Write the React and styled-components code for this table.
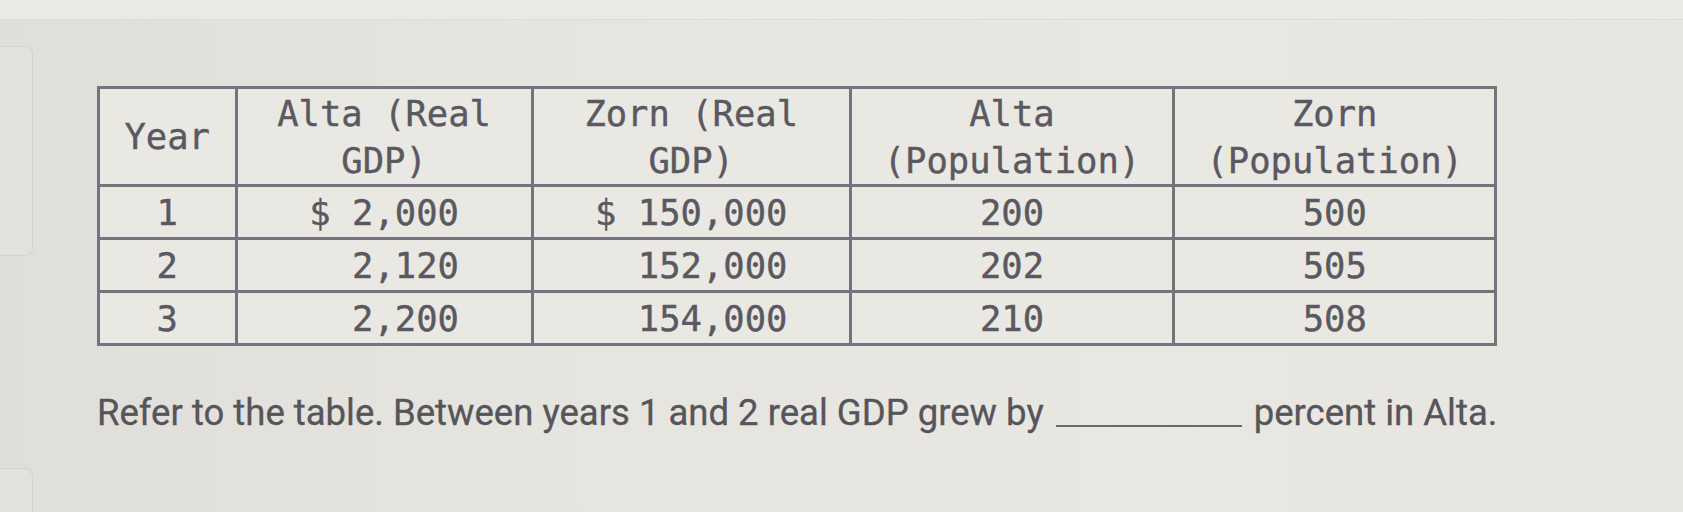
import React from "react";
import styled, { createGlobalStyle } from "styled-components";

const Global = createGlobalStyle`
  html, body { margin: 0; padding: 0; }
  body {
    width: 1683px;
    height: 512px;
    overflow: hidden;
    background: linear-gradient(90deg, #dfded9 0%, #e5e4df 30%, #e8e7e2 70%, #e6e5e0 100%);
  }
`;

const Page = styled.div`
  width: 1683px;
  height: 512px;
  display: flex;
  flex-direction: column;
`;

const TopBar = styled.div`
  height: 19px;
  flex: none;
  background: #eae9e5;
  border-bottom: 1px solid #dcdbd6;
`;

const Body = styled.div`
  flex: 1;
  display: flex;
`;

const Rail = styled.div`
  width: 33px;
  flex: none;
  display: flex;
  flex-direction: column;
  padding-top: 26px;
`;

const RailCard = styled.div`
  height: ${(p) => p.$h}px;
  margin-top: ${(p) => p.$mt || 0}px;
  border: 1px solid #d3d2cd;
  border-left: none;
  border-radius: 0 8px 8px 0;
  background: #e2e1dc;
`;

const Main = styled.div`
  margin-left: 64px;
  padding-top: 66px;
  display: flex;
  flex-direction: column;
`;

const Table = styled.table`
  border-collapse: collapse;
  font-family: "DejaVu Sans Mono", "Liberation Mono", monospace;
  font-size: 35.5px;
  color: #5a5860;
  -webkit-text-stroke: 0.4px #5a5860;
  background: #e9e8e3;
`;

const Cell = styled.td`
  border: 3px solid #77737e;
  width: ${(p) => p.$w}px;
  padding: 0;
  height: ${(p) => (p.$head ? 95 : 50)}px;
  line-height: 47px;
  text-align: center;
  white-space: pre;
  vertical-align: middle;
`;

const Question = styled.p`
  margin: 45px 0 0 0;
  font-family: Roboto, "Liberation Sans", sans-serif;
  font-size: 36.5px;
  line-height: 44px;
  color: #56555a;
  -webkit-text-stroke: 0.3px #56555a;
  white-space: nowrap;
`;

const Blank = styled.span`
  display: inline-block;
  width: 186px;
  height: 2px;
  margin: 0 12px -2px 12px;
  border-bottom: 2px solid #6a6970;
`;

const widths = [134, 292, 314, 319, 318];

const header = [
  "Year",
  "Alta (Real\nGDP)",
  "Zorn (Real\nGDP)",
  "Alta\n(Population)",
  "Zorn\n(Population)",
];

const rows = [
  ["1", "$ 2,000", "$ 150,000", "200", "500"],
  ["2", "  2,120", "  152,000", "202", "505"],
  ["3", "  2,200", "  154,000", "210", "508"],
];

export default function App() {
  return (
    <>
      <Global />
      <Page>
        <TopBar />
        <Body>
          <Rail>
            <RailCard $h={208} />
            <RailCard $h={60} $mt={212} />
          </Rail>
          <Main>
            <Table>
              <tbody>
                <tr>
                  {header.map((h, i) => (
                    <Cell key={i} $w={widths[i]} $head>
                      {h}
                    </Cell>
                  ))}
                </tr>
                {rows.map((r, ri) => (
                  <tr key={ri}>
                    {r.map((c, ci) => (
                      <Cell key={ci} $w={widths[ci]}>
                        {c}
                      </Cell>
                    ))}
                  </tr>
                ))}
              </tbody>
            </Table>
            <Question>
              Refer to the table. Between years 1 and 2 real GDP grew by
              <Blank />
              percent in Alta.
            </Question>
          </Main>
        </Body>
      </Page>
    </>
  );
}
